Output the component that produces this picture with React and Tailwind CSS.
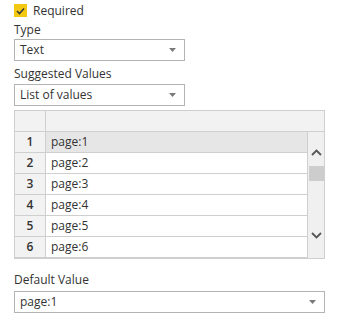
import React from 'react';

const rows = [1, 2, 3, 4, 5, 6, 7];

function Caret() {
  return (
    <svg width="7" height="4" viewBox="0 0 7 4" className="shrink-0">
      <path d="M0 0h7L3.5 4z" fill="#7a7a7a" />
    </svg>
  );
}

function Dropdown({ value, className = '' }) {
  return (
    <div
      className={`flex h-[22px] items-center justify-between border border-[#b3b3b3] bg-white pl-[5px] pr-[8px] ${className}`}
    >
      <span className="leading-none">{value}</span>
      <Caret />
    </div>
  );
}

export default function App() {
  return (
    <div
      className="h-[321px] w-[346px] bg-white pl-[14px] text-[12px] text-[#333333]"
      style={{ fontFamily: '"Segoe UI", "Open Sans", sans-serif' }}
    >
      {/* required */}
      <div className="flex h-[20px] items-center pt-[1px]">
        <div className="flex h-[13px] w-[13px] items-center justify-center bg-[#f2c811]">
          <svg width="9" height="8" viewBox="0 0 9 8">
            <path d="M1 4l2.5 2.5L8 1.5" stroke="#3a3a3a" strokeWidth="1.6" fill="none" />
          </svg>
        </div>
        <span className="ml-[6px]">Required</span>
      </div>

      <div className="flex h-[19px] items-center">Type</div>
      <Dropdown value="Text" className="w-[171px]" />

      <div className="flex h-[23px] items-center pt-[2px]">Suggested Values</div>
      <Dropdown value="List of values" className="w-[171px]" />

      {/* values grid */}
      <div className="mt-[4px] flex h-[149px] w-[311px] flex-col overflow-hidden border border-[#cfcfcf]">
        <div className="flex h-[21px] shrink-0 border-b border-[#cfcfcf] bg-[#f2f2f2]">
          <div className="w-[31px] border-r border-[#cfcfcf]" />
          <div className="flex-1" />
        </div>
        <div className="flex flex-1 overflow-hidden">
          <div className="flex-1">
            {rows.map((n) => (
              <div
                key={n}
                className={`flex h-[21px] border-b border-[#cfcfcf] ${n === 1 ? 'bg-[#e6e6e6]' : 'bg-white'}`}
              >
                <div className="flex w-[31px] items-center justify-center border-r border-[#cfcfcf] bg-[#f2f2f2] font-semibold">
                  {n < 7 ? n : ''}
                </div>
                <div className="flex items-center pl-[5px]">{n < 7 ? `page:${n}` : ''}</div>
              </div>
            ))}
          </div>
          <div className="flex w-[17px] flex-col items-center border-l border-[#cfcfcf] bg-[#f0f0f0]">
            <svg width="11" height="7" viewBox="0 0 11 7" className="mt-[17px]">
              <path d="M1 6l4.5-4.5L10 6" stroke="#555555" strokeWidth="1.8" fill="none" />
            </svg>
            <div className="mt-[10px] h-[15px] w-[15px] bg-[#cdcdcd]" />
            <svg width="11" height="7" viewBox="0 0 11 7" className="mt-[51px]">
              <path d="M1 1l4.5 4.5L10 1" stroke="#555555" strokeWidth="1.8" fill="none" />
            </svg>
          </div>
        </div>
      </div>

      <div className="flex h-[32px] items-end pb-[2px]">Default Value</div>
      <Dropdown value="page:1" className="w-[311px]" />
    </div>
  );
}
